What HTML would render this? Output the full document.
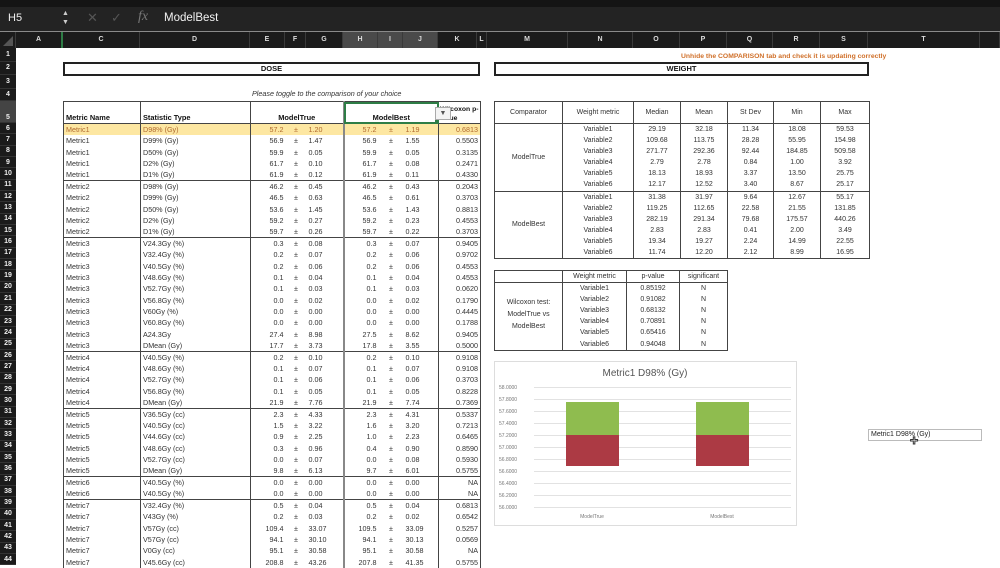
<!DOCTYPE html>
<html><head><meta charset="utf-8">
<style>
*{margin:0;padding:0;box-sizing:border-box}
body{width:1000px;height:563px;overflow:hidden;background:#fff;font-family:"Liberation Sans",sans-serif;position:relative;color:#333}
.abs{position:absolute}
#top{left:0;top:0;width:1000px;height:7px;background:#141414}
#fb{left:0;top:7px;width:1000px;height:24px;background:#232323;color:#ddd}
#sep{left:0;top:31px;width:1000px;height:1px;background:#8a8a8a}
#ch{left:0;top:32px;width:1000px;height:16px;background:#1b1b1b;display:flex;color:#ddd;font-size:7px;font-weight:bold}
#ch div{border-right:1px solid #3a3a3a;text-align:center;line-height:16px;flex:none}
#rh{left:0;top:48px;width:16px;background:#1b1b1b;color:#eee;font-size:7px;font-weight:bold}
#rh div{text-align:center;border-bottom:1px solid #333;display:flex;align-items:center;justify-content:center}
table{border-collapse:collapse;table-layout:fixed;position:absolute}
td{padding:0 2px;white-space:nowrap;overflow:hidden;font-size:7.2px;color:#333}
#dt td{height:11.35px;line-height:11px}
#dt tr.h td{height:22px;vertical-align:bottom;font-weight:bold;color:#111;font-size:7.4px;border-bottom:1px solid #444}
#dt td.c{border-left:1px solid #444}
#dt td.d{border-left:1px solid #444}
#dt td.e{border-left:1px solid #444;text-align:right}
#dt td.f{text-align:center;padding:0}
#dt td.g{text-align:left}
#dt td.hh{border-left:2px solid #888;text-align:right}
#dt td.k{border-left:1px solid #444;border-right:1px solid #444;text-align:right}
#dt tr.b td{border-top:1px solid #444}
#dt tr.y td{background:#fde7a2;color:#b06a30}
.wt td{text-align:center;font-size:7px;line-height:11.1px;height:11.1px}
</style></head><body>
<div class="abs" id="top"></div>
<div class="abs" id="fb">
 <span class="abs" style="left:8px;top:5px;font-size:11px;color:#eee">H5</span>
 <span class="abs" style="left:62px;top:2px;font-size:7px;color:#ccc;line-height:9px">▲<br>▼</span>
 <span class="abs" style="left:87px;top:3px;font-size:13px;color:#555">✕</span>
 <span class="abs" style="left:111px;top:3px;font-size:13px;color:#555">✓</span>
 <span class="abs" style="left:138px;top:2px;font-size:14px;color:#777;font-family:'Liberation Serif',serif;font-style:italic">fx</span>
 <span class="abs" style="left:164px;top:5px;font-size:11.5px;color:#f2f2f2">ModelBest</span>
</div>
<div class="abs" id="sep"></div>
<div class="abs" id="ch">
 <div style="width:16px;background:#1b1b1b;position:relative"><span style="position:absolute;right:2px;bottom:2px;width:0;height:0;border-left:10px solid transparent;border-bottom:10px solid #555"></span></div>
 <div style="width:47px;border-right:2px solid #2e7d46">A</div>
 <div style="width:77px">C</div><div style="width:110px">D</div><div style="width:35px">E</div><div style="width:21px">F</div><div style="width:37px">G</div>
 <div style="width:35px;background:#4a4a4a">H</div><div style="width:25px;background:#4a4a4a">I</div><div style="width:35px;background:#4a4a4a">J</div>
 <div style="width:39px">K</div><div style="width:10px">L</div><div style="width:81px">M</div><div style="width:65px">N</div><div style="width:47px">O</div><div style="width:47px">P</div><div style="width:46px">Q</div><div style="width:47px">R</div><div style="width:48px">S</div><div style="width:112px">T</div><div style="width:20px"></div>
</div>
<div class="abs" id="rh">
<div style="height:13.5px">1</div><div style="height:13.5px">2</div><div style="height:13.5px">3</div><div style="height:12.5px">4</div><div style="height:22px;background:#444;align-items:flex-end;padding-bottom:1px">5</div>
<div style="height:11.35px">6</div><div style="height:11.35px">7</div><div style="height:11.35px">8</div><div style="height:11.35px">9</div><div style="height:11.35px">10</div><div style="height:11.35px">11</div><div style="height:11.35px">12</div><div style="height:11.35px">13</div><div style="height:11.35px">14</div><div style="height:11.35px">15</div><div style="height:11.35px">16</div><div style="height:11.35px">17</div><div style="height:11.35px">18</div><div style="height:11.35px">19</div><div style="height:11.35px">20</div><div style="height:11.35px">21</div><div style="height:11.35px">22</div><div style="height:11.35px">23</div><div style="height:11.35px">24</div><div style="height:11.35px">25</div><div style="height:11.35px">26</div><div style="height:11.35px">27</div><div style="height:11.35px">28</div><div style="height:11.35px">29</div><div style="height:11.35px">30</div><div style="height:11.35px">31</div><div style="height:11.35px">32</div><div style="height:11.35px">33</div><div style="height:11.35px">34</div><div style="height:11.35px">35</div><div style="height:11.35px">36</div><div style="height:11.35px">37</div><div style="height:11.35px">38</div><div style="height:11.35px">39</div><div style="height:11.35px">40</div><div style="height:11.35px">41</div><div style="height:11.35px">42</div><div style="height:11.35px">43</div><div style="height:11.35px">44</div>
</div>

<div class="abs" style="left:63px;top:62px;width:417px;height:14px;border:2px solid #222;text-align:center;font-size:7.5px;font-weight:bold;line-height:10px;color:#111">DOSE</div>
<div class="abs" style="left:252px;top:89px;font-size:7.2px;font-style:italic;color:#333">Please toggle to the comparison of your choice</div>

<table id="dt" style="left:63px;top:101px;width:417px">
<colgroup><col style="width:77px"><col style="width:110px"><col style="width:35px"><col style="width:21px"><col style="width:37px"><col style="width:35px"><col style="width:25px"><col style="width:35px"><col style="width:42px"></colgroup>
<tr class="h" style="border-top:1px solid #444"><td class="c">Metric Name</td><td class="d">Statistic Type</td><td colspan="3" style="border-left:1px solid #444;text-align:center">ModelTrue</td><td colspan="3" style="border-left:2px solid #888;text-align:center;outline:2px solid #2e7d46;outline-offset:-2px">ModelBest</td><td class="k" style="text-align:left;line-height:9px;font-size:6.8px;padding-left:1px">Wilcoxon p-<br>value</td></tr>
<tr class="y"><td class="c">Metric1</td><td class="d">D98% (Gy)</td><td class="e">57.2</td><td class="f">±</td><td class="g">1.20</td><td class="hh">57.2</td><td class="f">±</td><td class="g">1.19</td><td class="k">0.6813</td></tr>
<tr><td class="c">Metric1</td><td class="d">D99% (Gy)</td><td class="e">56.9</td><td class="f">±</td><td class="g">1.47</td><td class="hh">56.9</td><td class="f">±</td><td class="g">1.55</td><td class="k">0.5503</td></tr>
<tr><td class="c">Metric1</td><td class="d">D50% (Gy)</td><td class="e">59.9</td><td class="f">±</td><td class="g">0.05</td><td class="hh">59.9</td><td class="f">±</td><td class="g">0.05</td><td class="k">0.3135</td></tr>
<tr><td class="c">Metric1</td><td class="d">D2% (Gy)</td><td class="e">61.7</td><td class="f">±</td><td class="g">0.10</td><td class="hh">61.7</td><td class="f">±</td><td class="g">0.08</td><td class="k">0.2471</td></tr>
<tr><td class="c">Metric1</td><td class="d">D1% (Gy)</td><td class="e">61.9</td><td class="f">±</td><td class="g">0.12</td><td class="hh">61.9</td><td class="f">±</td><td class="g">0.11</td><td class="k">0.4330</td></tr>
<tr class="b"><td class="c">Metric2</td><td class="d">D98% (Gy)</td><td class="e">46.2</td><td class="f">±</td><td class="g">0.45</td><td class="hh">46.2</td><td class="f">±</td><td class="g">0.43</td><td class="k">0.2043</td></tr>
<tr><td class="c">Metric2</td><td class="d">D99% (Gy)</td><td class="e">46.5</td><td class="f">±</td><td class="g">0.63</td><td class="hh">46.5</td><td class="f">±</td><td class="g">0.61</td><td class="k">0.3703</td></tr>
<tr><td class="c">Metric2</td><td class="d">D50% (Gy)</td><td class="e">53.6</td><td class="f">±</td><td class="g">1.45</td><td class="hh">53.6</td><td class="f">±</td><td class="g">1.43</td><td class="k">0.8813</td></tr>
<tr><td class="c">Metric2</td><td class="d">D2% (Gy)</td><td class="e">59.2</td><td class="f">±</td><td class="g">0.27</td><td class="hh">59.2</td><td class="f">±</td><td class="g">0.23</td><td class="k">0.4553</td></tr>
<tr><td class="c">Metric2</td><td class="d">D1% (Gy)</td><td class="e">59.7</td><td class="f">±</td><td class="g">0.26</td><td class="hh">59.7</td><td class="f">±</td><td class="g">0.22</td><td class="k">0.3703</td></tr>
<tr class="b"><td class="c">Metric3</td><td class="d">V24.3Gy (%)</td><td class="e">0.3</td><td class="f">±</td><td class="g">0.08</td><td class="hh">0.3</td><td class="f">±</td><td class="g">0.07</td><td class="k">0.9405</td></tr>
<tr><td class="c">Metric3</td><td class="d">V32.4Gy (%)</td><td class="e">0.2</td><td class="f">±</td><td class="g">0.07</td><td class="hh">0.2</td><td class="f">±</td><td class="g">0.06</td><td class="k">0.9702</td></tr>
<tr><td class="c">Metric3</td><td class="d">V40.5Gy (%)</td><td class="e">0.2</td><td class="f">±</td><td class="g">0.06</td><td class="hh">0.2</td><td class="f">±</td><td class="g">0.06</td><td class="k">0.4553</td></tr>
<tr><td class="c">Metric3</td><td class="d">V48.6Gy (%)</td><td class="e">0.1</td><td class="f">±</td><td class="g">0.04</td><td class="hh">0.1</td><td class="f">±</td><td class="g">0.04</td><td class="k">0.4553</td></tr>
<tr><td class="c">Metric3</td><td class="d">V52.7Gy (%)</td><td class="e">0.1</td><td class="f">±</td><td class="g">0.03</td><td class="hh">0.1</td><td class="f">±</td><td class="g">0.03</td><td class="k">0.0620</td></tr>
<tr><td class="c">Metric3</td><td class="d">V56.8Gy (%)</td><td class="e">0.0</td><td class="f">±</td><td class="g">0.02</td><td class="hh">0.0</td><td class="f">±</td><td class="g">0.02</td><td class="k">0.1790</td></tr>
<tr><td class="c">Metric3</td><td class="d">V60Gy (%)</td><td class="e">0.0</td><td class="f">±</td><td class="g">0.00</td><td class="hh">0.0</td><td class="f">±</td><td class="g">0.00</td><td class="k">0.4445</td></tr>
<tr><td class="c">Metric3</td><td class="d">V60.8Gy (%)</td><td class="e">0.0</td><td class="f">±</td><td class="g">0.00</td><td class="hh">0.0</td><td class="f">±</td><td class="g">0.00</td><td class="k">0.1788</td></tr>
<tr><td class="c">Metric3</td><td class="d">A24.3Gy</td><td class="e">27.4</td><td class="f">±</td><td class="g">8.98</td><td class="hh">27.5</td><td class="f">±</td><td class="g">8.62</td><td class="k">0.9405</td></tr>
<tr><td class="c">Metric3</td><td class="d">DMean (Gy)</td><td class="e">17.7</td><td class="f">±</td><td class="g">3.73</td><td class="hh">17.8</td><td class="f">±</td><td class="g">3.55</td><td class="k">0.5000</td></tr>
<tr class="b"><td class="c">Metric4</td><td class="d">V40.5Gy (%)</td><td class="e">0.2</td><td class="f">±</td><td class="g">0.10</td><td class="hh">0.2</td><td class="f">±</td><td class="g">0.10</td><td class="k">0.9108</td></tr>
<tr><td class="c">Metric4</td><td class="d">V48.6Gy (%)</td><td class="e">0.1</td><td class="f">±</td><td class="g">0.07</td><td class="hh">0.1</td><td class="f">±</td><td class="g">0.07</td><td class="k">0.9108</td></tr>
<tr><td class="c">Metric4</td><td class="d">V52.7Gy (%)</td><td class="e">0.1</td><td class="f">±</td><td class="g">0.06</td><td class="hh">0.1</td><td class="f">±</td><td class="g">0.06</td><td class="k">0.3703</td></tr>
<tr><td class="c">Metric4</td><td class="d">V56.8Gy (%)</td><td class="e">0.1</td><td class="f">±</td><td class="g">0.05</td><td class="hh">0.1</td><td class="f">±</td><td class="g">0.05</td><td class="k">0.8228</td></tr>
<tr><td class="c">Metric4</td><td class="d">DMean (Gy)</td><td class="e">21.9</td><td class="f">±</td><td class="g">7.76</td><td class="hh">21.9</td><td class="f">±</td><td class="g">7.74</td><td class="k">0.7369</td></tr>
<tr class="b"><td class="c">Metric5</td><td class="d">V36.5Gy (cc)</td><td class="e">2.3</td><td class="f">±</td><td class="g">4.33</td><td class="hh">2.3</td><td class="f">±</td><td class="g">4.31</td><td class="k">0.5337</td></tr>
<tr><td class="c">Metric5</td><td class="d">V40.5Gy (cc)</td><td class="e">1.5</td><td class="f">±</td><td class="g">3.22</td><td class="hh">1.6</td><td class="f">±</td><td class="g">3.20</td><td class="k">0.7213</td></tr>
<tr><td class="c">Metric5</td><td class="d">V44.6Gy (cc)</td><td class="e">0.9</td><td class="f">±</td><td class="g">2.25</td><td class="hh">1.0</td><td class="f">±</td><td class="g">2.23</td><td class="k">0.6465</td></tr>
<tr><td class="c">Metric5</td><td class="d">V48.6Gy (cc)</td><td class="e">0.3</td><td class="f">±</td><td class="g">0.96</td><td class="hh">0.4</td><td class="f">±</td><td class="g">0.90</td><td class="k">0.8590</td></tr>
<tr><td class="c">Metric5</td><td class="d">V52.7Gy (cc)</td><td class="e">0.0</td><td class="f">±</td><td class="g">0.07</td><td class="hh">0.0</td><td class="f">±</td><td class="g">0.08</td><td class="k">0.5930</td></tr>
<tr><td class="c">Metric5</td><td class="d">DMean (Gy)</td><td class="e">9.8</td><td class="f">±</td><td class="g">6.13</td><td class="hh">9.7</td><td class="f">±</td><td class="g">6.01</td><td class="k">0.5755</td></tr>
<tr class="b"><td class="c">Metric6</td><td class="d">V40.5Gy (%)</td><td class="e">0.0</td><td class="f">±</td><td class="g">0.00</td><td class="hh">0.0</td><td class="f">±</td><td class="g">0.00</td><td class="k">NA</td></tr>
<tr><td class="c">Metric6</td><td class="d">V40.5Gy (%)</td><td class="e">0.0</td><td class="f">±</td><td class="g">0.00</td><td class="hh">0.0</td><td class="f">±</td><td class="g">0.00</td><td class="k">NA</td></tr>
<tr class="b"><td class="c">Metric7</td><td class="d">V32.4Gy (%)</td><td class="e">0.5</td><td class="f">±</td><td class="g">0.04</td><td class="hh">0.5</td><td class="f">±</td><td class="g">0.04</td><td class="k">0.6813</td></tr>
<tr><td class="c">Metric7</td><td class="d">V43Gy (%)</td><td class="e">0.2</td><td class="f">±</td><td class="g">0.03</td><td class="hh">0.2</td><td class="f">±</td><td class="g">0.02</td><td class="k">0.6542</td></tr>
<tr><td class="c">Metric7</td><td class="d">V57Gy (cc)</td><td class="e">109.4</td><td class="f">±</td><td class="g">33.07</td><td class="hh">109.5</td><td class="f">±</td><td class="g">33.09</td><td class="k">0.5257</td></tr>
<tr><td class="c">Metric7</td><td class="d">V57Gy (cc)</td><td class="e">94.1</td><td class="f">±</td><td class="g">30.10</td><td class="hh">94.1</td><td class="f">±</td><td class="g">30.13</td><td class="k">0.0569</td></tr>
<tr><td class="c">Metric7</td><td class="d">V0Gy (cc)</td><td class="e">95.1</td><td class="f">±</td><td class="g">30.58</td><td class="hh">95.1</td><td class="f">±</td><td class="g">30.58</td><td class="k">NA</td></tr>
<tr><td class="c">Metric7</td><td class="d">V45.6Gy (cc)</td><td class="e">208.8</td><td class="f">±</td><td class="g">43.26</td><td class="hh">207.8</td><td class="f">±</td><td class="g">41.35</td><td class="k">0.5755</td></tr>
</table>
<div class="abs" style="left:435px;top:107px;width:16px;height:13px;background:#f4f4f4;border:1px solid #aaa;font-size:7px;text-align:center;line-height:11px;color:#555">▼</div>
<div class="abs" style="left:435px;top:120px;width:4px;height:4px;background:#2e7d46"></div>

<div class="abs" style="left:681px;top:53px;font-size:6.8px;font-weight:bold;color:#d0702a">Unhide the COMPARISON tab and check it is updating correctly</div>
<div class="abs" style="left:494px;top:62px;width:375px;height:14px;border:2px solid #222;text-align:center;font-size:7.5px;font-weight:bold;line-height:10px;color:#111">WEIGHT</div>

<table class="wt" style="left:494px;top:101px;width:375px;border:1px solid #444">
<colgroup><col style="width:68px"><col style="width:71px"><col style="width:47px"><col style="width:47px"><col style="width:46px"><col style="width:47px"><col style="width:49px"></colgroup>
<tr style="border-bottom:1px solid #444"><td style="height:22px;border-right:1px solid #444">Comparator</td><td style="height:22px;border-right:1px solid #444">Weight metric</td><td style="height:22px;border-right:1px solid #444">Median</td><td style="height:22px;border-right:1px solid #444">Mean</td><td style="height:22px;border-right:1px solid #444">St Dev</td><td style="height:22px;border-right:1px solid #444">Min</td><td style="height:22px">Max</td></tr>
<tr><td rowspan="6" style="border-right:1px solid #444">ModelTrue</td><td style="border-right:1px solid #444">Variable1</td><td style="border-right:1px solid #444">29.19</td><td style="border-right:1px solid #444">32.18</td><td style="border-right:1px solid #444">11.34</td><td style="border-right:1px solid #444">18.08</td><td>59.53</td></tr>
<tr><td style="border-right:1px solid #444">Variable2</td><td style="border-right:1px solid #444">109.68</td><td style="border-right:1px solid #444">113.75</td><td style="border-right:1px solid #444">28.28</td><td style="border-right:1px solid #444">55.95</td><td>154.98</td></tr>
<tr><td style="border-right:1px solid #444">Variable3</td><td style="border-right:1px solid #444">271.77</td><td style="border-right:1px solid #444">292.36</td><td style="border-right:1px solid #444">92.44</td><td style="border-right:1px solid #444">184.85</td><td>509.58</td></tr>
<tr><td style="border-right:1px solid #444">Variable4</td><td style="border-right:1px solid #444">2.79</td><td style="border-right:1px solid #444">2.78</td><td style="border-right:1px solid #444">0.84</td><td style="border-right:1px solid #444">1.00</td><td>3.92</td></tr>
<tr><td style="border-right:1px solid #444">Variable5</td><td style="border-right:1px solid #444">18.13</td><td style="border-right:1px solid #444">18.93</td><td style="border-right:1px solid #444">3.37</td><td style="border-right:1px solid #444">13.50</td><td>25.75</td></tr>
<tr><td style="border-right:1px solid #444">Variable6</td><td style="border-right:1px solid #444">12.17</td><td style="border-right:1px solid #444">12.52</td><td style="border-right:1px solid #444">3.40</td><td style="border-right:1px solid #444">8.67</td><td>25.17</td></tr>
<tr style="border-top:1px solid #444"><td rowspan="6" style="border-right:1px solid #444">ModelBest</td><td style="border-right:1px solid #444">Variable1</td><td style="border-right:1px solid #444">31.38</td><td style="border-right:1px solid #444">31.97</td><td style="border-right:1px solid #444">9.64</td><td style="border-right:1px solid #444">12.67</td><td>55.17</td></tr>
<tr><td style="border-right:1px solid #444">Variable2</td><td style="border-right:1px solid #444">119.25</td><td style="border-right:1px solid #444">112.65</td><td style="border-right:1px solid #444">22.58</td><td style="border-right:1px solid #444">21.55</td><td>131.85</td></tr>
<tr><td style="border-right:1px solid #444">Variable3</td><td style="border-right:1px solid #444">282.19</td><td style="border-right:1px solid #444">291.34</td><td style="border-right:1px solid #444">79.68</td><td style="border-right:1px solid #444">175.57</td><td>440.26</td></tr>
<tr><td style="border-right:1px solid #444">Variable4</td><td style="border-right:1px solid #444">2.83</td><td style="border-right:1px solid #444">2.83</td><td style="border-right:1px solid #444">0.41</td><td style="border-right:1px solid #444">2.00</td><td>3.49</td></tr>
<tr><td style="border-right:1px solid #444">Variable5</td><td style="border-right:1px solid #444">19.34</td><td style="border-right:1px solid #444">19.27</td><td style="border-right:1px solid #444">2.24</td><td style="border-right:1px solid #444">14.99</td><td>22.55</td></tr>
<tr><td style="border-right:1px solid #444">Variable6</td><td style="border-right:1px solid #444">11.74</td><td style="border-right:1px solid #444">12.20</td><td style="border-right:1px solid #444">2.12</td><td style="border-right:1px solid #444">8.99</td><td>16.95</td></tr>
</table>

<table class="wt" style="left:494px;top:270px;width:233px;border:1px solid #444">
<colgroup><col style="width:68px"><col style="width:64px"><col style="width:53px"><col style="width:48px"></colgroup>
<tr style="border-bottom:1px solid #444"><td style="border-right:1px solid #444;border-bottom:none"></td><td style="border-right:1px solid #444">Weight metric</td><td style="border-right:1px solid #444">p-value</td><td>significant</td></tr>
<tr><td rowspan="6" style="border-right:1px solid #444;line-height:12px;vertical-align:top;padding-top:14px">Wilcoxon test:<br>ModelTrue vs<br>ModelBest</td><td style="border-right:1px solid #444">Variable1</td><td style="border-right:1px solid #444">0.85192</td><td>N</td></tr>
<tr><td style="border-right:1px solid #444">Variable2</td><td style="border-right:1px solid #444">0.91082</td><td>N</td></tr>
<tr><td style="border-right:1px solid #444">Variable3</td><td style="border-right:1px solid #444">0.68132</td><td>N</td></tr>
<tr><td style="border-right:1px solid #444">Variable4</td><td style="border-right:1px solid #444">0.70891</td><td>N</td></tr>
<tr><td style="border-right:1px solid #444">Variable5</td><td style="border-right:1px solid #444">0.65416</td><td>N</td></tr>
<tr><td style="border-right:1px solid #444">Variable6</td><td style="border-right:1px solid #444">0.94048</td><td>N</td></tr>
</table>

<svg class="abs" style="left:494px;top:361px" width="303" height="165" viewBox="0 0 303 165">
<rect x="0.5" y="0.5" width="302" height="164" fill="#fff" stroke="#ddd"/>
<text x="151" y="15" text-anchor="middle" font-size="10" fill="#555" font-family="Liberation Sans">Metric1 D98% (Gy)</text>
<g stroke="#e2e2e2" stroke-width="1">
<line x1="40" x2="297" y1="26.5" y2="26.5"/><line x1="40" x2="297" y1="38.5" y2="38.5"/><line x1="40" x2="297" y1="50.5" y2="50.5"/><line x1="40" x2="297" y1="62.5" y2="62.5"/><line x1="40" x2="297" y1="74.5" y2="74.5"/><line x1="40" x2="297" y1="86.5" y2="86.5"/><line x1="40" x2="297" y1="98.5" y2="98.5"/><line x1="40" x2="297" y1="110.5" y2="110.5"/><line x1="40" x2="297" y1="122.5" y2="122.5"/><line x1="40" x2="297" y1="134.5" y2="134.5"/><line x1="40" x2="297" y1="146.5" y2="146.5"/>
</g>
<g font-size="5" fill="#777" font-family="Liberation Sans">
<text x="5" y="28">58.0000</text><text x="5" y="40">57.8000</text><text x="5" y="52">57.6000</text><text x="5" y="64">57.4000</text><text x="5" y="76">57.2000</text><text x="5" y="88">57.0000</text><text x="5" y="100">56.8000</text><text x="5" y="112">56.6000</text><text x="5" y="124">56.4000</text><text x="5" y="136">56.2000</text><text x="5" y="148">56.0000</text>
<text x="98" y="157" text-anchor="middle">ModelTrue</text><text x="228" y="157" text-anchor="middle">ModelBest</text>
</g>
<rect x="72" y="41" width="53" height="33" fill="#8fbc4f"/><rect x="72" y="74" width="53" height="31" fill="#ac3a44"/>
<rect x="202" y="41" width="53" height="33" fill="#8fbc4f"/><rect x="202" y="74" width="53" height="31" fill="#ac3a44"/>
</svg>

<div class="abs" style="left:868px;top:429px;width:114px;height:12px;border:1px solid #bbb;font-size:7px;line-height:10px;padding-left:2px;color:#222">Metric1 D98% (Gy)</div>
<div class="abs" style="left:910px;top:433px;font-size:14px;color:#fff;-webkit-text-stroke:1px #333;line-height:14px;font-weight:bold">+</div>
</body></html>
